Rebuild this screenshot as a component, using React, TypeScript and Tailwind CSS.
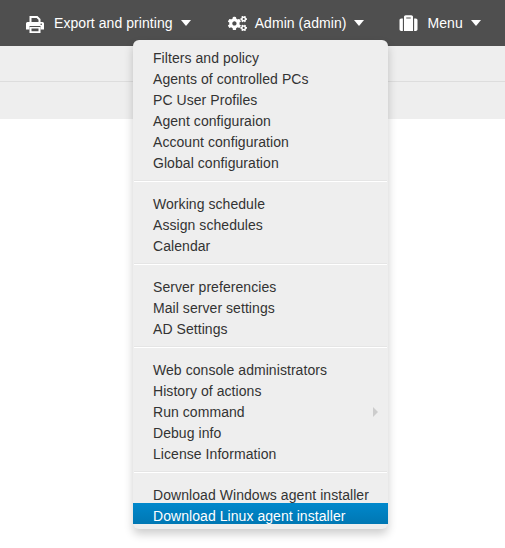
import { FaCogs, FaSuitcase } from "react-icons/fa";

const groups = [
  ["Filters and policy", "Agents of controlled PCs", "PC User Profiles", "Agent configuraion", "Account configuration", "Global configuration"],
  ["Working schedule", "Assign schedules", "Calendar"],
  ["Server preferencies", "Mail server settings", "AD Settings"],
  ["Web console administrators", "History of actions", "Run command", "Debug info", "License Information"],
  ["Download Windows agent installer", "Download Linux agent installer"],
];

function Caret() {
  return <span className="ml-[8px] w-0 h-0 border-x-[5.5px] border-x-transparent border-t-[6px] border-t-white" />;
}

function PrintIcon() {
  return (
    <svg viewBox="0 0 18 17" className="w-[18px] h-[17px] mt-[3px]" fill="currentColor" aria-hidden="true">
      <path fillRule="evenodd" d="M3.5 0h8L14.5 3V7h-11zM5.5 2V6h7V3.8L10.6 2z" />
      <path d="M1.5 6h15A1.5 1.5 0 0 1 18 7.5V13.5h-3.5v-3.5h-11v3.5H0V7.5A1.5 1.5 0 0 1 1.5 6z" />
      <path fillRule="evenodd" d="M3.5 11h11v6h-11zM5.5 12.5v2.8h7v-2.8z" />
      <circle cx="15.2" cy="8.2" r="0.8" fill="#4f4f4f" />
    </svg>
  );
}

export default function App() {
  return (
    <div className="relative w-[505px] h-[548px] bg-white overflow-hidden font-['Liberation_Sans',Arial,sans-serif] text-[14px] tracking-[0.06px]">
      <nav className="h-[46px] bg-[#4f4f4f] text-white flex items-center">
        <span className="flex items-center ml-[26px]">
          <PrintIcon />
          <span className="ml-[10px]">Export and printing</span>
          <Caret />
        </span>
        <span className="flex items-center ml-[35px]">
          <FaCogs className="w-[19px] h-[17px] ml-[2px]" />
          <span className="ml-[8px]">Admin (admin)</span>
          <Caret />
        </span>
        <span className="flex items-center ml-[35px]">
          <FaSuitcase className="w-[19px] h-[18px]" />
          <span className="ml-[9px]">Menu</span>
          <Caret />
        </span>
      </nav>
      <div className="h-[36px] bg-[#eeeeee] border-b border-[#dddddd]" />
      <div className="h-[37px] bg-[#eeeeee]" />
      <div className="absolute left-[133px] top-[40px] w-[255px] py-[5px] bg-[#eeeeee] rounded-[6px] shadow-[0_5px_10px_rgba(0,0,0,0.2)] text-[#333333]">
        {groups.map((g, i) => (
          <div key={i}>
            {i > 0 && <div className="my-[9px] mx-px h-[2px] bg-[#e5e5e5] border-b border-white" />}
            {g.map((t) => (
              <div
                key={t}
                className={
                  "relative h-[21px] px-[20px] leading-[27px] whitespace-nowrap " +
                  (t === "Download Linux agent installer"
                    ? "bg-gradient-to-b from-[#0088cc] to-[#0077b3] text-white"
                    : "")
                }
              >
                {t}
                {t === "Run command" && (
                  <span className="absolute right-[10px] top-[8px] w-0 h-0 border-y-[5px] border-y-transparent border-l-[5px] border-l-[#cccccc]" />
                )}
              </div>
            ))}
          </div>
        ))}
      </div>
    </div>
  );
}
